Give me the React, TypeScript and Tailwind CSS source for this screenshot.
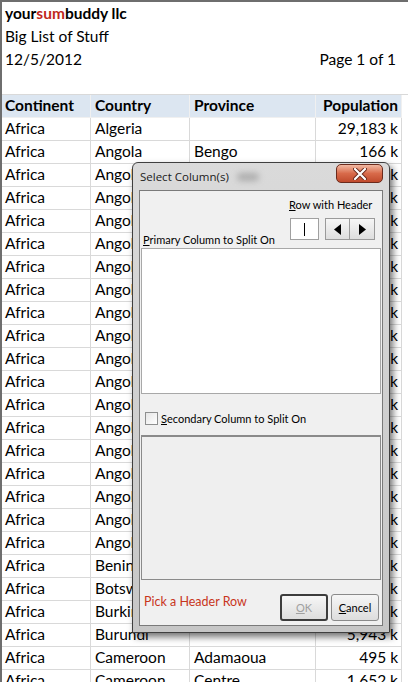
import React from 'react';

const rows: [string, string, string, string][] = [
  ['Africa', 'Algeria', '', '29,183 k'],
  ['Africa', 'Angola', 'Bengo', '166 k'],
  ['Africa', 'Angola', 'Benguela', '592 k'],
  ['Africa', 'Angola', 'Bie', '1,125 k'],
  ['Africa', 'Angola', 'Cabinda', '152 k'],
  ['Africa', 'Angola', 'Cuando Cubango', '137 k'],
  ['Africa', 'Angola', 'Cuanza Norte', '384 k'],
  ['Africa', 'Angola', 'Cuanza Sul', '688 k'],
  ['Africa', 'Angola', 'Cunene', '245 k'],
  ['Africa', 'Angola', 'Huambo', '1,521 k'],
  ['Africa', 'Angola', 'Huila', '885 k'],
  ['Africa', 'Angola', 'Luanda', '1,945 k'],
  ['Africa', 'Angola', 'Lunda Norte', '312 k'],
  ['Africa', 'Angola', 'Lunda Sul', '169 k'],
  ['Africa', 'Angola', 'Malanje', '975 k'],
  ['Africa', 'Angola', 'Moxico', '350 k'],
  ['Africa', 'Angola', 'Namibe', '135 k'],
  ['Africa', 'Angola', 'Uige', '935 k'],
  ['Africa', 'Angola', 'Zaire', '247 k'],
  ['Africa', 'Benin', '', '6,396 k'],
  ['Africa', 'Botswana', '', '1,607 k'],
  ['Africa', 'Burkina Faso', '', '12,058 k'],
  ['Africa', 'Burundi', '', '5,943 k'],
  ['Africa', 'Cameroon', 'Adamaoua', '495 k'],
  ['Africa', 'Cameroon', 'Centre', '1,652 k'],
];

const cell = 'h-[23px] flex items-center border-b border-r border-[#d9d9d9] overflow-hidden whitespace-nowrap';

function Sheet() {
  return (
    <div className="font-['Lato',sans-serif] text-[15.5px] text-black leading-none">
      <div className="h-[23px] flex items-center pl-[3px] font-bold">
        your<span className="text-[#c0281d]">sum</span>buddy llc
      </div>
      <div className="h-[23px] flex items-center pl-[3px]">Big List of Stuff</div>
      <div className="h-[23px] flex items-center justify-between pl-[3px] pr-[12px]">
        <span>12/5/2012</span>
        <span>Page 1 of 1</span>
      </div>
      <div className="h-[24px] border-b border-[#d9d9d9]" />
      <div className="grid grid-cols-[89px_99px_126px_86px]">
        <div className={`${cell} bg-[#dce6f1] font-bold pl-[3px] border-[#f0f0f0]`}>Continent</div>
        <div className={`${cell} bg-[#dce6f1] font-bold pl-[4px] border-[#f0f0f0]`}>Country</div>
        <div className={`${cell} bg-[#dce6f1] font-bold pl-[4px] border-[#f0f0f0]`}>Province</div>
        <div className={`${cell} bg-[#dce6f1] font-bold justify-end pr-[3px] border-[#f0f0f0]`}>Population</div>
        {rows.map((r, i) => (
          <React.Fragment key={i}>
            <div className={`${cell} pl-[3px]`}>{r[0]}</div>
            <div className={`${cell} pl-[4px]`}>{r[1]}</div>
            <div className={`${cell} pl-[4px]`}>{r[2]}</div>
            <div className={`${cell} justify-end pr-[3px]`}>{r[3]}</div>
          </React.Fragment>
        ))}
      </div>
    </div>
  );
}

function WinButton({ children, disabled, isDefault }: { children: React.ReactNode; disabled?: boolean; isDefault?: boolean }) {
  return (
    <div
      className={`w-[48px] h-[27px] shrink-0 flex items-center justify-center rounded-[3px] bg-gradient-to-b from-[#f6f6f6] to-[#dddddd] ${
        isDefault ? 'border-2 border-[#3c3c3c]' : 'border border-[#8a8a8a]'
      } ${disabled ? 'text-[#a0a0a0]' : 'text-black'}`}
    >
      {children}
    </div>
  );
}

function Dialog() {
  return (
    <div className="absolute left-[130px] top-[160px] w-[258px] h-[471px] rounded-t-[6px] border border-[#3f3f3f] bg-gradient-to-b from-[#dadada] to-[#c6c6c6] shadow-[3px_4px_7px_rgba(0,0,0,0.55)] font-['Lato',sans-serif] text-[11px] leading-none text-black flex flex-col px-[6px] pb-[6px]">
      {/* title bar */}
      <div className="h-[27px] shrink-0 flex items-center pl-[1px] relative font-['Open_Sans',sans-serif] text-[11.5px]">
        <span className="text-[#1a1a1a]">Select Column(s)</span>
        <span className="ml-[8px] w-[22px] h-[8px] rounded-full bg-[#9a9a9a] blur-[3px] opacity-70" />
        <div className="absolute right-0 top-[1px] w-[47px] h-[19px] rounded-[5px] border border-[#6a2a1c] bg-gradient-to-b from-[#f0b8a2] via-[#d86a4a] to-[#c04a2c] flex items-center justify-center">
          <svg width="14" height="12" viewBox="0 0 14 12">
            <path d="M2 1 L12 11 M12 1 L2 11" stroke="#6a2a1c" strokeWidth="4" strokeLinecap="round" />
            <path d="M2 1 L12 11 M12 1 L2 11" stroke="#ffffff" strokeWidth="2.2" strokeLinecap="round" />
          </svg>
        </div>
      </div>
      {/* client */}
      <div className="flex-1 border border-[#7a7a7a] bg-[#f0f0f0] flex flex-col">
        <div className="h-[57px] shrink-0 flex items-end justify-between pl-[3px] pr-[7px] pb-[3px] whitespace-nowrap">
          <span>
            <span className="underline">P</span>rimary Column to Split On
          </span>
          <div className="flex flex-col items-start">
            <span className="mb-[8px] -ml-[1px]">
              <span className="underline">R</span>ow with Header
            </span>
            <div className="flex items-center mb-[5px]">
              <div className="w-[29px] h-[22px] bg-white border border-[#a0a0a0] flex items-center justify-center">
                <div className="w-px h-[13px] bg-black" />
              </div>
              <div className="ml-[6px] flex">
                <div className="w-[25px] h-[22px] border border-[#9a9a9a] bg-gradient-to-b from-[#f6f6f6] to-[#dedede] flex items-center justify-center">
                  <svg width="7" height="11" viewBox="0 0 7 11"><path d="M7 0 L0 5.5 L7 11 Z" fill="#000" /></svg>
                </div>
                <div className="w-[25px] h-[22px] border border-l-0 border-[#9a9a9a] bg-gradient-to-b from-[#f6f6f6] to-[#dedede] flex items-center justify-center">
                  <svg width="7" height="11" viewBox="0 0 7 11"><path d="M0 0 L7 5.5 L0 11 Z" fill="#000" /></svg>
                </div>
              </div>
            </div>
          </div>
        </div>
        <div className="mx-px h-[146px] shrink-0 bg-white border border-[#a8a8a8]" />
        <div className="h-[41px] shrink-0 flex items-center pl-[5px] gap-[3px] pt-[7px]">
          <div className="w-[13px] h-[13px] border border-[#8e8f8f] bg-gradient-to-br from-[#e6e6e6] to-white" />
          <span>
            <span className="underline">S</span>econdary Column to Split On
          </span>
        </div>
        <div className="mx-px h-[145px] shrink-0 border-t-2 border-l border-b border-r border-[#8a8a8a] bg-[#efefef]" />
        <div className="flex-1 flex items-start justify-between pl-[4px] pr-[3px] pt-[14px]">
          <span className="text-[#c8351c] pt-[2px] text-[12.5px]">Pick a Header Row</span>
          <div className="flex gap-[3px]">
            <WinButton disabled isDefault>
              <span className="underline">O</span>K
            </WinButton>
            <WinButton>
              <span className="underline">C</span>ancel
            </WinButton>
          </div>
        </div>
      </div>
    </div>
  );
}

export default function App() {
  return (
    <div className="w-[408px] h-[682px] overflow-hidden bg-white relative border-t-2 border-l-2 border-[#6e6e6e]">
      <Sheet />
      <Dialog />
    </div>
  );
}
